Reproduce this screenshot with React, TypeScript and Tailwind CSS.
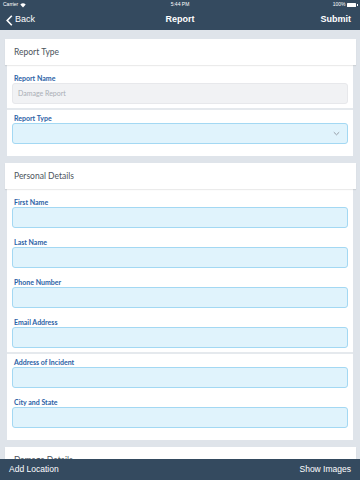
import React from 'react';

type Field = { label: string; value?: string; disabled?: boolean; select?: boolean };

const reportGroups: Field[][] = [
  [{ label: 'Report Name', value: 'Damage Report', disabled: true }],
  [{ label: 'Report Type', select: true }],
];

const personalGroups: Field[][] = [
  [
    { label: 'First Name' },
    { label: 'Last Name' },
    { label: 'Phone Number' },
    { label: 'Email Address' },
  ],
  [{ label: 'Address of Incident' }, { label: 'City and State' }],
];

function Input({ field }: { field: Field }) {
  if (field.disabled) {
    return (
      <div className="h-[21px] rounded-[3px] border border-[#e7e8eb] bg-[#f1f2f4] px-[5px] flex items-center text-[7px] text-[#a9aeb5]">
        {field.value}
      </div>
    );
  }
  return (
    <div className="h-[21px] rounded-[3px] border border-[#a3d8f3] bg-[#e0f3fc] flex items-center justify-end pr-[7px]">
      {field.select && (
        <svg width="7" height="5" viewBox="0 0 7 5" fill="none">
          <path d="M0.8 1.2 L3.5 3.8 L6.2 1.2" stroke="#8d949c" strokeWidth="0.9" />
        </svg>
      )}
    </div>
  );
}

function Row({ field, first }: { field: Field; first: boolean }) {
  return (
    <div className={first ? '' : 'mt-[10px]'}>
      <div className="h-[9px] leading-[9px] pl-[2px] text-[7px] font-bold text-[#2c62a6]">{field.label}</div>
      <Input field={field} />
    </div>
  );
}

function Card({ title, groups }: { title: string; groups: Field[][] }) {
  return (
    <div className="mb-[7px]">
      <div className="h-[26px] bg-white flex items-center px-[9px] text-[8.5px] text-[#4b535c] shadow-[0_1px_1px_rgba(0,0,0,0.08)] relative">
        {title}
      </div>
      <div className="ml-[2px] mr-[3px] bg-[#e5e9ed] flex flex-col gap-[2px]">
        {groups.map((g, gi) => (
          <div
            key={gi}
            className={`bg-white px-[5px] ${gi === 0 ? 'pt-[9px]' : 'pt-[4px]'} ${gi === groups.length - 1 ? 'pb-[12px]' : 'pb-[4px]'}`}
          >
            {g.map((f, i) => (
              <Row key={f.label} field={f} first={i === 0} />
            ))}
          </div>
        ))}
      </div>
    </div>
  );
}

export default function App() {
  return (
    <div
      className="w-[360px] h-[480px] overflow-hidden flex flex-col bg-[#dfe4ea]"
      style={{ fontFamily: 'Lato, "Liberation Sans", sans-serif' }}
    >
      <div className="h-[30px] bg-[#344a5f] text-white shrink-0" style={{ fontFamily: '"Liberation Sans", Arial, sans-serif' }}>
        <div className="h-[10px] relative flex items-center px-[3px] text-[5px]">
          <span>Carrier</span>
          <svg className="ml-[2px]" width="6" height="5" viewBox="0 0 6 5">
            <path d="M3 4.6 L0.3 1.6 A4 4 0 0 1 5.7 1.6 Z" fill="white" />
          </svg>
          <span className="absolute left-1/2 -translate-x-1/2">5:44 PM</span>
          <div className="ml-auto flex items-center gap-[1px]">
            <span>100%</span>
            <div className="w-[9px] h-[4px] bg-white rounded-[0.5px]" />
            <div className="w-[0.5px] h-[2px] bg-white" />
          </div>
        </div>
        <div className="h-[20px] relative flex items-center px-[6px] text-[9px]">
          <svg width="7" height="11" viewBox="0 0 7 11" fill="none">
            <path d="M5.8 0.8 L1.2 5.5 L5.8 10.2" stroke="white" strokeWidth="1.6" />
          </svg>
          <span className="ml-[2px]">Back</span>
          <span className="absolute left-1/2 -translate-x-1/2 font-semibold">Report</span>
          <span className="ml-auto mr-[3px] font-semibold">Submit</span>
        </div>
      </div>

      <div className="flex-1 overflow-hidden pt-[9px] pl-[5px] pr-[4px]">
        <Card title="Report Type" groups={reportGroups} />
        <Card title="Personal Details" groups={personalGroups} />
        <Card title="Damage Details" groups={[[{ label: 'Damage Type' }]]} />
      </div>

      <div className="h-[21px] bg-[#344a5f] text-white shrink-0 flex items-center justify-between px-[9px] text-[8.5px]" style={{ fontFamily: '"Liberation Sans", Arial, sans-serif' }}>
        <span>Add Location</span>
        <span>Show Images</span>
      </div>
    </div>
  );
}
